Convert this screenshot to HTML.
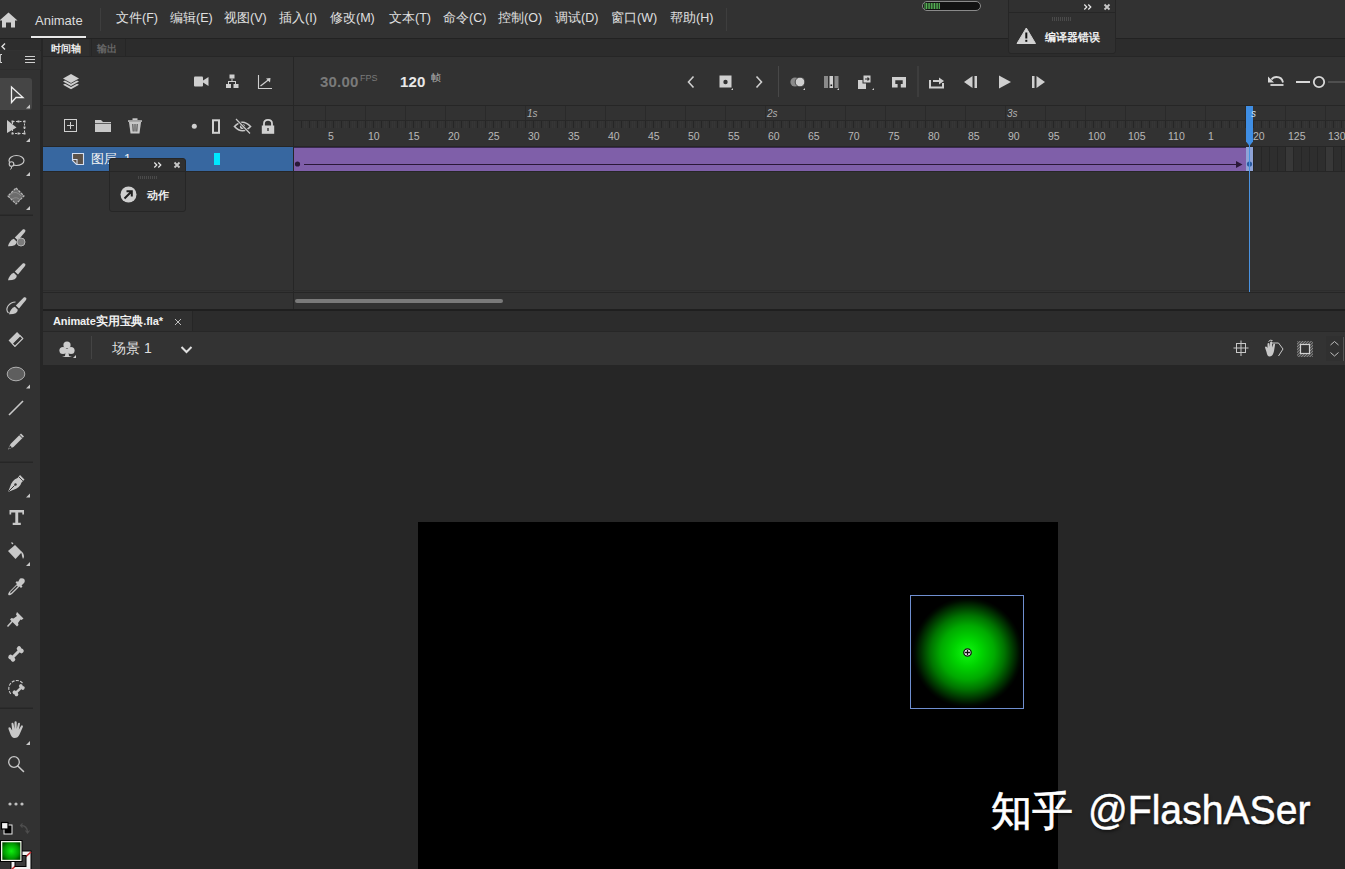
<!DOCTYPE html>
<html><head><meta charset="utf-8">
<style>
*{margin:0;padding:0;box-sizing:border-box}
html,body{width:1345px;height:869px;overflow:hidden;background:#262626;font-family:"Liberation Sans",sans-serif;color:#d8d8d8}
.a{position:absolute}
svg{position:absolute;overflow:visible}
.menu{left:0;top:0;width:1345px;height:38px;background:#323232}
.rl{position:absolute;top:130px;font-size:10.5px;line-height:13px;color:#b8b8b8;white-space:nowrap}
.sl{position:absolute;top:108px;font-size:10px;line-height:12px;color:#b0b0b0;font-style:italic}
.mi{position:absolute;top:10px;font-size:12.5px;color:#e0e0e0;white-space:nowrap;line-height:16px}
</style></head><body>
<!-- menu bar -->
<div class="a menu"></div>
<div class="a" style="left:0;top:38px;width:1345px;height:1px;background:#222"></div>
<!-- home icon -->
<svg style="left:0;top:11.5px" width="18" height="16" viewBox="0 0 18 16"><path d="M8.5 0.5 L17.5 8.5 L15 8.5 L15 15.5 L11 15.5 L11 10.5 L6 10.5 L6 15.5 L2 15.5 L2 8.5 L-0.5 8.5 Z" fill="#cfcfcf"/></svg>
<div class="mi" style="left:35px;top:12.5px;font-size:13px;color:#dcdcdc">Animate</div>
<div class="a" style="left:31px;top:36px;width:55px;height:2px;background:#e8e8e8"></div>
<div class="a" style="left:100px;top:8px;width:1px;height:23px;background:#3e3e3e"></div>
<div class="mi" style="left:116px">文件(F)</div>
<div class="mi" style="left:170px">编辑(E)</div>
<div class="mi" style="left:224px">视图(V)</div>
<div class="mi" style="left:279px">插入(I)</div>
<div class="mi" style="left:330px">修改(M)</div>
<div class="mi" style="left:389px">文本(T)</div>
<div class="mi" style="left:443px">命令(C)</div>
<div class="mi" style="left:498px">控制(O)</div>
<div class="mi" style="left:555px">调试(D)</div>
<div class="mi" style="left:611px">窗口(W)</div>
<div class="mi" style="left:670px">帮助(H)</div>
<div class="a" style="left:726px;top:8px;width:1px;height:23px;background:#3e3e3e"></div>



<!-- left toolbar -->
<div class="a" style="left:0;top:39px;width:41px;height:830px;background:#323232"></div>
<div class="a" style="left:40px;top:39px;width:3px;height:830px;background:#262626"></div>
<!-- toolbar header -->
<div class="a" style="left:0;top:39px;width:41px;height:11px;background:#2d2d2d"></div>
<svg style="left:1px;top:43px" width="5" height="7"><path d="M4 0.5 L1 3.5 L4 6.5" stroke="#e0e0e0" stroke-width="1.4" fill="none"/></svg>
<div class="a" style="left:0;top:51px;width:41px;height:18px;background:#303030"></div>
<div class="a" style="left:0;top:54px;width:2px;height:1px;background:#ddd"></div>
<div class="a" style="left:0;top:62px;width:2px;height:1px;background:#ddd"></div>
<div class="a" style="left:0;top:54px;width:1px;height:9px;background:#bbb"></div>
<div class="a" style="left:25px;top:56px;width:10px;height:1px;background:#d0d0d0"></div>
<div class="a" style="left:25px;top:59px;width:10px;height:1px;background:#d0d0d0"></div>
<div class="a" style="left:25px;top:62px;width:10px;height:1px;background:#d0d0d0"></div>
<div class="a" style="left:0;top:69px;width:41px;height:1px;background:#2c2c2c"></div>
<!-- selected tool -->
<div class="a" style="left:-3px;top:78px;width:35px;height:32px;background:#454545;border-radius:3px"></div>
<svg style="left:0;top:0" width="41" height="869" viewBox="0 0 41 869">
<g fill="#c8c8c8" stroke="none">
<!-- corner triangles -->
<path d="M30 104.5 L30 108.5 L26 108.5Z"/>
<path d="M30 138 L30 142 L26 142Z"/>
<path d="M30 172 L30 176 L26 176Z"/>
<path d="M30 206 L30 210 L26 210Z"/>
<path d="M30 384.5 L30 388.5 L26 388.5Z"/>
<path d="M30 493.5 L30 497.5 L26 497.5Z"/>
<path d="M30 562 L30 566 L26 566Z"/>
<path d="M30 741 L30 745 L26 745Z"/>
</g>
<!-- separators -->
<rect x="0" y="214.5" width="33" height="1.5" fill="#262626"/>
<rect x="0" y="461.5" width="33" height="1.5" fill="#262626"/>
<rect x="0" y="707.5" width="33" height="1.5" fill="#262626"/>
<!-- selection -->
<path d="M11.5 87 L11.5 102.5 L16 97.5 L23 97.5 Z" fill="none" stroke="#f0f0f0" stroke-width="1.3" stroke-linejoin="miter"/>
<!-- free transform -->
<path d="M7 120 L7 133 L16.5 127.5 Z" fill="#c8c8c8"/>
<rect x="12.5" y="121.5" width="12" height="12" fill="none" stroke="#c8c8c8" stroke-width="1" stroke-dasharray="2 1.5"/>
<g fill="#c8c8c8"><rect x="11.5" y="120.5" width="2" height="2"/><rect x="23.5" y="120.5" width="2" height="2"/><rect x="11.5" y="132.5" width="2" height="2"/><rect x="23.5" y="132.5" width="2" height="2"/><rect x="17.5" y="120.5" width="2" height="2"/><rect x="17.5" y="132.5" width="2" height="2"/><rect x="23.5" y="126.5" width="2" height="2"/></g>
<!-- lasso -->
<ellipse cx="16.5" cy="160.5" rx="7.5" ry="5" fill="none" stroke="#c8c8c8" stroke-width="1.2"/>
<circle cx="11.5" cy="164" r="2.3" fill="#323232" stroke="#c8c8c8" stroke-width="1.1"/>
<path d="M11.5 166.5 Q12 168 10.5 169.5" fill="none" stroke="#c8c8c8" stroke-width="1"/>
<!-- warp diamond -->
<path d="M16 188 L24 196 L16 204 L8 196 Z" fill="#6c6c6c" stroke="#b8b8b8" stroke-width="1.2" stroke-dasharray="2.5 1"/>
<path d="M11 194 Q16 190 21 196 M12 199 Q17 196 20 200" fill="none" stroke="#909090" stroke-width="0.8"/>
<!-- fluid brush -->
<path d="M23 229.3 Q24.5 228.8 25.3 230 Q25.6 231 25 232 L18 240.6 L14.8 237.6 Z" fill="#c8c8c8"/>
<path d="M13.8 238.8 L16.8 241.8 Q16.5 246.5 8 246.3 Q9.5 240.5 13.8 238.8 Z" fill="#c8c8c8"/>
<circle cx="21" cy="242" r="4" fill="#7c7c7c" stroke="#bdbdbd" stroke-width="0.9"/>
<!-- brush -->
<path d="M23 263.3 Q24.5 262.8 25.3 264 Q25.6 265 25 266 L18 274.6 L14.8 271.6 Z" fill="#c8c8c8"/>
<path d="M13.8 272.8 L16.8 275.8 Q16.5 280.5 8 280.3 Q9.5 274.5 13.8 272.8 Z" fill="#c8c8c8"/>
<!-- art brush -->
<path d="M24 297.3 Q25.5 296.8 26.3 298 Q26.6 299 26 300 L19 308.6 L15.8 305.6 Z" fill="#c8c8c8"/>
<path d="M14.8 306.8 L17.8 309.8 Q17.5 314.5 9 314.3 Q10.5 308.5 14.8 306.8 Z" fill="#c8c8c8"/>
<path d="M15.5 302 Q11 302 8 306 Q5.5 310 8.5 313" fill="none" stroke="#c8c8c8" stroke-width="1.1"/>
<!-- eraser -->
<g transform="rotate(-45 16 339.5)"><rect x="10" y="335" width="12" height="9" fill="#c8c8c8"/><rect x="10.5" y="339.8" width="11" height="3.7" fill="#323232" stroke="#c8c8c8" stroke-width="1"/></g>
<!-- oval -->
<ellipse cx="16" cy="374" rx="8.8" ry="6.8" fill="#5e5e5e" stroke="#bcbcbc" stroke-width="0.9"/>
<!-- line -->
<path d="M9 415 L23 401" stroke="#c8c8c8" stroke-width="1.6"/>
<!-- pencil -->
<path d="M21 433.5 L24 436.5 L13.5 447 L8 449.5 L10.5 444 Z" fill="#c8c8c8"/>
<path d="M19.5 435 L22.5 438" stroke="#323232" stroke-width="1"/>
<path d="M8.5 449 L10 445.5 L12 447.5 Z" fill="#323232"/>
<!-- pen -->
<path d="M20 475 L24.5 479.5 L21.5 482.5 Q20 488 13 490 L8 492 L10 487 Q12 480 17.5 478 Z" fill="#c8c8c8"/>
<path d="M8.5 491.5 L14.5 485.5" stroke="#323232" stroke-width="1"/>
<circle cx="15.5" cy="484.5" r="1.2" fill="#323232"/>
<path d="M18.8 476.8 L22.8 480.8" stroke="#323232" stroke-width="0.9"/>
<!-- T -->
<path d="M9.5 510 L24 510 L24 514.5 L22.3 514.5 L22.3 512.6 L18.2 512.6 L18.2 522.8 L20.8 522.8 L20.8 525 L12.7 525 L12.7 522.8 L15.3 522.8 L15.3 512.6 L11.2 512.6 L11.2 514.5 L9.5 514.5 Z" fill="#c8c8c8"/>
<!-- bucket -->
<path d="M8 551 L15 545 L22 552 L15.5 559 Z" fill="#c8c8c8"/>
<path d="M13 544 L11.5 542.5" stroke="#c8c8c8" stroke-width="1.2"/>
<path d="M21.5 551.5 Q24 553 24 557 L23 559 L22 556 Q22 554 21 552.5 Z" fill="#c8c8c8"/>
<!-- eyedropper -->
<path d="M20 578.5 Q23 577.5 24.5 579.5 Q25.5 582 23 584 L21.5 585.5 L22.5 586.5 L21 588 L19.5 586.5 L12 594 Q9.5 596 8.5 595 Q7.5 594 9.5 591.5 L17 584 L15.5 582.5 L17 581 L18 582 Z" fill="#c8c8c8"/>
<path d="M16.8 585.5 L10.5 591.8 Q9.8 593 10.6 593.5 L17.8 586.5Z" fill="#323232"/>
<!-- pin -->
<path d="M17 612 L23.5 618.5 L21.5 620 L20.5 619.5 L18 623 L18.5 625 L17 626.5 L10 619.5 L11.5 618 L13.5 618.5 L17 616 L16 614.5 Z" fill="#c8c8c8"/>
<path d="M12.5 621 L7.5 626.5" stroke="#c8c8c8" stroke-width="1.5"/>
<!-- bone -->
<g transform="rotate(-45 16 654)"><rect x="11" y="652.5" width="10" height="3" fill="#c8c8c8"/><circle cx="10" cy="652.3" r="2.3" fill="#c8c8c8"/><circle cx="10" cy="655.7" r="2.3" fill="#c8c8c8"/><circle cx="22" cy="652.3" r="2.3" fill="#c8c8c8"/><circle cx="22" cy="655.7" r="2.3" fill="#c8c8c8"/></g>
<!-- bind -->
<path d="M22.5 683 A7.5 7.5 0 1 0 11 694" fill="none" stroke="#c8c8c8" stroke-width="1.1" stroke-dasharray="3 1.3"/>
<g transform="rotate(-45 18.5 690)"><rect x="14.5" y="689" width="8" height="2.4" fill="#c8c8c8"/><circle cx="14" cy="688.8" r="1.9" fill="#c8c8c8"/><circle cx="14" cy="691.6" r="1.9" fill="#c8c8c8"/><circle cx="23" cy="688.8" r="1.9" fill="#c8c8c8"/><circle cx="23" cy="691.6" r="1.9" fill="#c8c8c8"/></g>
<!-- hand -->
<path d="M10 733 L8.5 729 Q8 727.5 9.3 727.3 Q10.5 727.2 11.5 729.5 L12.2 730.5 L11.5 724 Q11.3 722.8 12.3 722.7 Q13.3 722.6 13.6 724 L14.5 729 L14.5 722.5 Q14.5 721.3 15.6 721.3 Q16.7 721.3 16.7 722.5 L16.7 729 L18 723.5 Q18.3 722.5 19.3 722.7 Q20.2 723 19.9 724.2 L18.8 729.8 L21 726 Q21.6 725 22.5 725.5 Q23.3 726.1 22.7 727.2 L19.5 734.5 Q18 738 14.5 738 Q11.5 738 10 733 Z" fill="#c8c8c8"/>
<!-- zoom -->
<circle cx="14" cy="762" r="5.3" fill="none" stroke="#c8c8c8" stroke-width="1.3"/>
<path d="M17.8 766 L23.5 771.5" stroke="#c8c8c8" stroke-width="1.6" stroke-linecap="round"/>
<!-- dots -->
<circle cx="10" cy="804" r="1.6" fill="#c0c0c0"/><circle cx="16" cy="804" r="1.6" fill="#c0c0c0"/><circle cx="22" cy="804" r="1.6" fill="#c0c0c0"/>
<!-- default colors -->
<rect x="4" y="825" width="8" height="9" fill="#000" stroke="#e8e8e8" stroke-width="1"/>
<rect x="1.5" y="822.5" width="6.5" height="6.5" fill="#f2f2f2" stroke="#000" stroke-width="1.2"/>
<!-- swap -->
<path d="M21 825.5 Q27 825.5 27.5 832" fill="none" stroke="#4e4e4e" stroke-width="1.3"/>
<path d="M25.5 830.5 L27.5 833 L29.5 830.5" fill="none" stroke="#4e4e4e" stroke-width="1.2"/>
<path d="M22.5 823.5 L20.5 825.5 L22.5 827.5" fill="none" stroke="#4e4e4e" stroke-width="1.2"/>
<!-- stroke swatch -->
<rect x="10.5" y="850.5" width="21" height="20" fill="#000"/>
<rect x="11.5" y="851.5" width="19" height="19" fill="#f2f2f2"/>
<path d="M11 870 L31 852" stroke="#c8282c" stroke-width="1.6"/>
<rect x="14.5" y="855" width="12" height="12" fill="#000"/>
<rect x="15.5" y="856" width="10" height="10" fill="#3a3a3a"/>
<!-- fill swatch -->
<defs><radialGradient id="gsw" cx="0.5" cy="0.5" r="0.6"><stop offset="0" stop-color="#10ee10"/><stop offset="0.7" stop-color="#009a00"/><stop offset="1" stop-color="#005500"/></radialGradient></defs>
<rect x="0" y="840" width="22.5" height="22" fill="#000"/>
<rect x="1" y="841" width="20.5" height="20" fill="#f4f4ec"/>
<rect x="2.3" y="842.3" width="18" height="17.5" fill="url(#gsw)"/>
</svg>



<!-- timeline panel -->
<div class="a" style="left:43px;top:39px;width:1302px;height:270px;background:#323232"></div>
<!-- tab row -->
<div class="a" style="left:43px;top:39px;width:1302px;height:17px;background:#2c2c2c"></div>
<div class="a" style="left:43px;top:39px;width:46px;height:17px;background:#2f2f2f"></div>
<div class="a" style="left:91px;top:39px;width:1px;height:17px;background:#262626"></div>
<div class="a" style="left:125px;top:39px;width:1px;height:17px;background:#262626"></div>
<div class="a" style="left:43px;top:56px;width:1302px;height:1px;background:#262626"></div>
<div class="a" style="left:51px;top:40.5px;font-size:10px;line-height:15px;color:#f0f0f0;font-weight:bold">时间轴</div>
<div class="a" style="left:97px;top:40.5px;font-size:10px;line-height:15px;color:#666;font-weight:bold">输出</div>
<!-- vertical divider layer/frames -->
<div class="a" style="left:293px;top:57px;width:1px;height:252px;background:#262626"></div>
<!-- row separators -->
<div class="a" style="left:43px;top:105px;width:1302px;height:1px;background:#262626"></div>
<div class="a" style="left:43px;top:146px;width:250px;height:1px;background:#262626"></div>
<div class="a" style="left:43px;top:292px;width:1302px;height:1px;background:#262626"></div>
<div class="a" style="left:43px;top:290px;width:1302px;height:1px;background:#2d2d2d"></div>
<div class="a" style="left:43px;top:309px;width:1302px;height:2px;background:#1f1f1f"></div>
<!-- scrollbar thumb -->
<div class="a" style="left:295px;top:299px;width:208px;height:4px;background:#7a7a7a;border-radius:2px"></div>


<!-- ruler -->
<div class="a" style="left:294px;top:106px;width:1051px;height:40px;background:#323232"></div>
<div class="a" style="left:294px;top:120px;width:1051px;height:1px;background:#282828"></div>
<svg style="left:0;top:0" width="1345" height="146" viewBox="0 0 1345 146"><rect x="325" y="106" width="1" height="14" fill="#2a2a2a"/><rect x="365" y="106" width="1" height="14" fill="#2a2a2a"/><rect x="405" y="106" width="1" height="14" fill="#2a2a2a"/><rect x="445" y="106" width="1" height="14" fill="#2a2a2a"/><rect x="485" y="106" width="1" height="14" fill="#2a2a2a"/><rect x="525" y="106" width="1" height="14" fill="#2a2a2a"/><rect x="565" y="106" width="1" height="14" fill="#2a2a2a"/><rect x="605" y="106" width="1" height="14" fill="#2a2a2a"/><rect x="645" y="106" width="1" height="14" fill="#2a2a2a"/><rect x="685" y="106" width="1" height="14" fill="#2a2a2a"/><rect x="725" y="106" width="1" height="14" fill="#2a2a2a"/><rect x="765" y="106" width="1" height="14" fill="#2a2a2a"/><rect x="805" y="106" width="1" height="14" fill="#2a2a2a"/><rect x="845" y="106" width="1" height="14" fill="#2a2a2a"/><rect x="885" y="106" width="1" height="14" fill="#2a2a2a"/><rect x="925" y="106" width="1" height="14" fill="#2a2a2a"/><rect x="965" y="106" width="1" height="14" fill="#2a2a2a"/><rect x="1005" y="106" width="1" height="14" fill="#2a2a2a"/><rect x="1045" y="106" width="1" height="14" fill="#2a2a2a"/><rect x="1085" y="106" width="1" height="14" fill="#2a2a2a"/><rect x="1125" y="106" width="1" height="14" fill="#2a2a2a"/><rect x="1165" y="106" width="1" height="14" fill="#2a2a2a"/><rect x="1205" y="106" width="1" height="14" fill="#2a2a2a"/><rect x="1245" y="106" width="1" height="14" fill="#2a2a2a"/><rect x="1285" y="106" width="1" height="14" fill="#2a2a2a"/><rect x="1325" y="106" width="1" height="14" fill="#2a2a2a"/><rect x="301" y="121" width="1" height="7" fill="#262626"/><rect x="304" y="121" width="1" height="7" fill="#363636"/><rect x="306" y="121" width="1" height="7" fill="#363636"/><rect x="309" y="121" width="1" height="7" fill="#262626"/><rect x="312" y="121" width="1" height="7" fill="#363636"/><rect x="314" y="121" width="1" height="7" fill="#363636"/><rect x="317" y="121" width="1" height="7" fill="#262626"/><rect x="320" y="121" width="1" height="7" fill="#363636"/><rect x="322" y="121" width="1" height="7" fill="#363636"/><rect x="325" y="121" width="1" height="7" fill="#262626"/><rect x="328" y="121" width="1" height="7" fill="#363636"/><rect x="330" y="121" width="1" height="7" fill="#363636"/><rect x="333" y="121" width="1" height="7" fill="#262626"/><rect x="336" y="121" width="1" height="7" fill="#363636"/><rect x="338" y="121" width="1" height="7" fill="#363636"/><rect x="341" y="121" width="1" height="7" fill="#262626"/><rect x="344" y="121" width="1" height="7" fill="#363636"/><rect x="346" y="121" width="1" height="7" fill="#363636"/><rect x="349" y="121" width="1" height="7" fill="#262626"/><rect x="352" y="121" width="1" height="7" fill="#363636"/><rect x="354" y="121" width="1" height="7" fill="#363636"/><rect x="357" y="121" width="1" height="7" fill="#262626"/><rect x="360" y="121" width="1" height="7" fill="#363636"/><rect x="362" y="121" width="1" height="7" fill="#363636"/><rect x="365" y="121" width="1" height="7" fill="#262626"/><rect x="368" y="121" width="1" height="7" fill="#363636"/><rect x="370" y="121" width="1" height="7" fill="#363636"/><rect x="373" y="121" width="1" height="7" fill="#262626"/><rect x="376" y="121" width="1" height="7" fill="#363636"/><rect x="378" y="121" width="1" height="7" fill="#363636"/><rect x="381" y="121" width="1" height="7" fill="#262626"/><rect x="384" y="121" width="1" height="7" fill="#363636"/><rect x="386" y="121" width="1" height="7" fill="#363636"/><rect x="389" y="121" width="1" height="7" fill="#262626"/><rect x="392" y="121" width="1" height="7" fill="#363636"/><rect x="394" y="121" width="1" height="7" fill="#363636"/><rect x="397" y="121" width="1" height="7" fill="#262626"/><rect x="400" y="121" width="1" height="7" fill="#363636"/><rect x="402" y="121" width="1" height="7" fill="#363636"/><rect x="405" y="121" width="1" height="7" fill="#262626"/><rect x="408" y="121" width="1" height="7" fill="#363636"/><rect x="410" y="121" width="1" height="7" fill="#363636"/><rect x="413" y="121" width="1" height="7" fill="#262626"/><rect x="416" y="121" width="1" height="7" fill="#363636"/><rect x="418" y="121" width="1" height="7" fill="#363636"/><rect x="421" y="121" width="1" height="7" fill="#262626"/><rect x="424" y="121" width="1" height="7" fill="#363636"/><rect x="426" y="121" width="1" height="7" fill="#363636"/><rect x="429" y="121" width="1" height="7" fill="#262626"/><rect x="432" y="121" width="1" height="7" fill="#363636"/><rect x="434" y="121" width="1" height="7" fill="#363636"/><rect x="437" y="121" width="1" height="7" fill="#262626"/><rect x="440" y="121" width="1" height="7" fill="#363636"/><rect x="442" y="121" width="1" height="7" fill="#363636"/><rect x="445" y="121" width="1" height="7" fill="#262626"/><rect x="448" y="121" width="1" height="7" fill="#363636"/><rect x="450" y="121" width="1" height="7" fill="#363636"/><rect x="453" y="121" width="1" height="7" fill="#262626"/><rect x="456" y="121" width="1" height="7" fill="#363636"/><rect x="458" y="121" width="1" height="7" fill="#363636"/><rect x="461" y="121" width="1" height="7" fill="#262626"/><rect x="464" y="121" width="1" height="7" fill="#363636"/><rect x="466" y="121" width="1" height="7" fill="#363636"/><rect x="469" y="121" width="1" height="7" fill="#262626"/><rect x="472" y="121" width="1" height="7" fill="#363636"/><rect x="474" y="121" width="1" height="7" fill="#363636"/><rect x="477" y="121" width="1" height="7" fill="#262626"/><rect x="480" y="121" width="1" height="7" fill="#363636"/><rect x="482" y="121" width="1" height="7" fill="#363636"/><rect x="485" y="121" width="1" height="7" fill="#262626"/><rect x="488" y="121" width="1" height="7" fill="#363636"/><rect x="490" y="121" width="1" height="7" fill="#363636"/><rect x="493" y="121" width="1" height="7" fill="#262626"/><rect x="496" y="121" width="1" height="7" fill="#363636"/><rect x="498" y="121" width="1" height="7" fill="#363636"/><rect x="501" y="121" width="1" height="7" fill="#262626"/><rect x="504" y="121" width="1" height="7" fill="#363636"/><rect x="506" y="121" width="1" height="7" fill="#363636"/><rect x="509" y="121" width="1" height="7" fill="#262626"/><rect x="512" y="121" width="1" height="7" fill="#363636"/><rect x="514" y="121" width="1" height="7" fill="#363636"/><rect x="517" y="121" width="1" height="7" fill="#262626"/><rect x="520" y="121" width="1" height="7" fill="#363636"/><rect x="522" y="121" width="1" height="7" fill="#363636"/><rect x="525" y="121" width="1" height="7" fill="#262626"/><rect x="528" y="121" width="1" height="7" fill="#363636"/><rect x="530" y="121" width="1" height="7" fill="#363636"/><rect x="533" y="121" width="1" height="7" fill="#262626"/><rect x="536" y="121" width="1" height="7" fill="#363636"/><rect x="538" y="121" width="1" height="7" fill="#363636"/><rect x="541" y="121" width="1" height="7" fill="#262626"/><rect x="544" y="121" width="1" height="7" fill="#363636"/><rect x="546" y="121" width="1" height="7" fill="#363636"/><rect x="549" y="121" width="1" height="7" fill="#262626"/><rect x="552" y="121" width="1" height="7" fill="#363636"/><rect x="554" y="121" width="1" height="7" fill="#363636"/><rect x="557" y="121" width="1" height="7" fill="#262626"/><rect x="560" y="121" width="1" height="7" fill="#363636"/><rect x="562" y="121" width="1" height="7" fill="#363636"/><rect x="565" y="121" width="1" height="7" fill="#262626"/><rect x="568" y="121" width="1" height="7" fill="#363636"/><rect x="570" y="121" width="1" height="7" fill="#363636"/><rect x="573" y="121" width="1" height="7" fill="#262626"/><rect x="576" y="121" width="1" height="7" fill="#363636"/><rect x="578" y="121" width="1" height="7" fill="#363636"/><rect x="581" y="121" width="1" height="7" fill="#262626"/><rect x="584" y="121" width="1" height="7" fill="#363636"/><rect x="586" y="121" width="1" height="7" fill="#363636"/><rect x="589" y="121" width="1" height="7" fill="#262626"/><rect x="592" y="121" width="1" height="7" fill="#363636"/><rect x="594" y="121" width="1" height="7" fill="#363636"/><rect x="597" y="121" width="1" height="7" fill="#262626"/><rect x="600" y="121" width="1" height="7" fill="#363636"/><rect x="602" y="121" width="1" height="7" fill="#363636"/><rect x="605" y="121" width="1" height="7" fill="#262626"/><rect x="608" y="121" width="1" height="7" fill="#363636"/><rect x="610" y="121" width="1" height="7" fill="#363636"/><rect x="613" y="121" width="1" height="7" fill="#262626"/><rect x="616" y="121" width="1" height="7" fill="#363636"/><rect x="618" y="121" width="1" height="7" fill="#363636"/><rect x="621" y="121" width="1" height="7" fill="#262626"/><rect x="624" y="121" width="1" height="7" fill="#363636"/><rect x="626" y="121" width="1" height="7" fill="#363636"/><rect x="629" y="121" width="1" height="7" fill="#262626"/><rect x="632" y="121" width="1" height="7" fill="#363636"/><rect x="634" y="121" width="1" height="7" fill="#363636"/><rect x="637" y="121" width="1" height="7" fill="#262626"/><rect x="640" y="121" width="1" height="7" fill="#363636"/><rect x="642" y="121" width="1" height="7" fill="#363636"/><rect x="645" y="121" width="1" height="7" fill="#262626"/><rect x="648" y="121" width="1" height="7" fill="#363636"/><rect x="650" y="121" width="1" height="7" fill="#363636"/><rect x="653" y="121" width="1" height="7" fill="#262626"/><rect x="656" y="121" width="1" height="7" fill="#363636"/><rect x="658" y="121" width="1" height="7" fill="#363636"/><rect x="661" y="121" width="1" height="7" fill="#262626"/><rect x="664" y="121" width="1" height="7" fill="#363636"/><rect x="666" y="121" width="1" height="7" fill="#363636"/><rect x="669" y="121" width="1" height="7" fill="#262626"/><rect x="672" y="121" width="1" height="7" fill="#363636"/><rect x="674" y="121" width="1" height="7" fill="#363636"/><rect x="677" y="121" width="1" height="7" fill="#262626"/><rect x="680" y="121" width="1" height="7" fill="#363636"/><rect x="682" y="121" width="1" height="7" fill="#363636"/><rect x="685" y="121" width="1" height="7" fill="#262626"/><rect x="688" y="121" width="1" height="7" fill="#363636"/><rect x="690" y="121" width="1" height="7" fill="#363636"/><rect x="693" y="121" width="1" height="7" fill="#262626"/><rect x="696" y="121" width="1" height="7" fill="#363636"/><rect x="698" y="121" width="1" height="7" fill="#363636"/><rect x="701" y="121" width="1" height="7" fill="#262626"/><rect x="704" y="121" width="1" height="7" fill="#363636"/><rect x="706" y="121" width="1" height="7" fill="#363636"/><rect x="709" y="121" width="1" height="7" fill="#262626"/><rect x="712" y="121" width="1" height="7" fill="#363636"/><rect x="714" y="121" width="1" height="7" fill="#363636"/><rect x="717" y="121" width="1" height="7" fill="#262626"/><rect x="720" y="121" width="1" height="7" fill="#363636"/><rect x="722" y="121" width="1" height="7" fill="#363636"/><rect x="725" y="121" width="1" height="7" fill="#262626"/><rect x="728" y="121" width="1" height="7" fill="#363636"/><rect x="730" y="121" width="1" height="7" fill="#363636"/><rect x="733" y="121" width="1" height="7" fill="#262626"/><rect x="736" y="121" width="1" height="7" fill="#363636"/><rect x="738" y="121" width="1" height="7" fill="#363636"/><rect x="741" y="121" width="1" height="7" fill="#262626"/><rect x="744" y="121" width="1" height="7" fill="#363636"/><rect x="746" y="121" width="1" height="7" fill="#363636"/><rect x="749" y="121" width="1" height="7" fill="#262626"/><rect x="752" y="121" width="1" height="7" fill="#363636"/><rect x="754" y="121" width="1" height="7" fill="#363636"/><rect x="757" y="121" width="1" height="7" fill="#262626"/><rect x="760" y="121" width="1" height="7" fill="#363636"/><rect x="762" y="121" width="1" height="7" fill="#363636"/><rect x="765" y="121" width="1" height="7" fill="#262626"/><rect x="768" y="121" width="1" height="7" fill="#363636"/><rect x="770" y="121" width="1" height="7" fill="#363636"/><rect x="773" y="121" width="1" height="7" fill="#262626"/><rect x="776" y="121" width="1" height="7" fill="#363636"/><rect x="778" y="121" width="1" height="7" fill="#363636"/><rect x="781" y="121" width="1" height="7" fill="#262626"/><rect x="784" y="121" width="1" height="7" fill="#363636"/><rect x="786" y="121" width="1" height="7" fill="#363636"/><rect x="789" y="121" width="1" height="7" fill="#262626"/><rect x="792" y="121" width="1" height="7" fill="#363636"/><rect x="794" y="121" width="1" height="7" fill="#363636"/><rect x="797" y="121" width="1" height="7" fill="#262626"/><rect x="800" y="121" width="1" height="7" fill="#363636"/><rect x="802" y="121" width="1" height="7" fill="#363636"/><rect x="805" y="121" width="1" height="7" fill="#262626"/><rect x="808" y="121" width="1" height="7" fill="#363636"/><rect x="810" y="121" width="1" height="7" fill="#363636"/><rect x="813" y="121" width="1" height="7" fill="#262626"/><rect x="816" y="121" width="1" height="7" fill="#363636"/><rect x="818" y="121" width="1" height="7" fill="#363636"/><rect x="821" y="121" width="1" height="7" fill="#262626"/><rect x="824" y="121" width="1" height="7" fill="#363636"/><rect x="826" y="121" width="1" height="7" fill="#363636"/><rect x="829" y="121" width="1" height="7" fill="#262626"/><rect x="832" y="121" width="1" height="7" fill="#363636"/><rect x="834" y="121" width="1" height="7" fill="#363636"/><rect x="837" y="121" width="1" height="7" fill="#262626"/><rect x="840" y="121" width="1" height="7" fill="#363636"/><rect x="842" y="121" width="1" height="7" fill="#363636"/><rect x="845" y="121" width="1" height="7" fill="#262626"/><rect x="848" y="121" width="1" height="7" fill="#363636"/><rect x="850" y="121" width="1" height="7" fill="#363636"/><rect x="853" y="121" width="1" height="7" fill="#262626"/><rect x="856" y="121" width="1" height="7" fill="#363636"/><rect x="858" y="121" width="1" height="7" fill="#363636"/><rect x="861" y="121" width="1" height="7" fill="#262626"/><rect x="864" y="121" width="1" height="7" fill="#363636"/><rect x="866" y="121" width="1" height="7" fill="#363636"/><rect x="869" y="121" width="1" height="7" fill="#262626"/><rect x="872" y="121" width="1" height="7" fill="#363636"/><rect x="874" y="121" width="1" height="7" fill="#363636"/><rect x="877" y="121" width="1" height="7" fill="#262626"/><rect x="880" y="121" width="1" height="7" fill="#363636"/><rect x="882" y="121" width="1" height="7" fill="#363636"/><rect x="885" y="121" width="1" height="7" fill="#262626"/><rect x="888" y="121" width="1" height="7" fill="#363636"/><rect x="890" y="121" width="1" height="7" fill="#363636"/><rect x="893" y="121" width="1" height="7" fill="#262626"/><rect x="896" y="121" width="1" height="7" fill="#363636"/><rect x="898" y="121" width="1" height="7" fill="#363636"/><rect x="901" y="121" width="1" height="7" fill="#262626"/><rect x="904" y="121" width="1" height="7" fill="#363636"/><rect x="906" y="121" width="1" height="7" fill="#363636"/><rect x="909" y="121" width="1" height="7" fill="#262626"/><rect x="912" y="121" width="1" height="7" fill="#363636"/><rect x="914" y="121" width="1" height="7" fill="#363636"/><rect x="917" y="121" width="1" height="7" fill="#262626"/><rect x="920" y="121" width="1" height="7" fill="#363636"/><rect x="922" y="121" width="1" height="7" fill="#363636"/><rect x="925" y="121" width="1" height="7" fill="#262626"/><rect x="928" y="121" width="1" height="7" fill="#363636"/><rect x="930" y="121" width="1" height="7" fill="#363636"/><rect x="933" y="121" width="1" height="7" fill="#262626"/><rect x="936" y="121" width="1" height="7" fill="#363636"/><rect x="938" y="121" width="1" height="7" fill="#363636"/><rect x="941" y="121" width="1" height="7" fill="#262626"/><rect x="944" y="121" width="1" height="7" fill="#363636"/><rect x="946" y="121" width="1" height="7" fill="#363636"/><rect x="949" y="121" width="1" height="7" fill="#262626"/><rect x="952" y="121" width="1" height="7" fill="#363636"/><rect x="954" y="121" width="1" height="7" fill="#363636"/><rect x="957" y="121" width="1" height="7" fill="#262626"/><rect x="960" y="121" width="1" height="7" fill="#363636"/><rect x="962" y="121" width="1" height="7" fill="#363636"/><rect x="965" y="121" width="1" height="7" fill="#262626"/><rect x="968" y="121" width="1" height="7" fill="#363636"/><rect x="970" y="121" width="1" height="7" fill="#363636"/><rect x="973" y="121" width="1" height="7" fill="#262626"/><rect x="976" y="121" width="1" height="7" fill="#363636"/><rect x="978" y="121" width="1" height="7" fill="#363636"/><rect x="981" y="121" width="1" height="7" fill="#262626"/><rect x="984" y="121" width="1" height="7" fill="#363636"/><rect x="986" y="121" width="1" height="7" fill="#363636"/><rect x="989" y="121" width="1" height="7" fill="#262626"/><rect x="992" y="121" width="1" height="7" fill="#363636"/><rect x="994" y="121" width="1" height="7" fill="#363636"/><rect x="997" y="121" width="1" height="7" fill="#262626"/><rect x="1000" y="121" width="1" height="7" fill="#363636"/><rect x="1002" y="121" width="1" height="7" fill="#363636"/><rect x="1005" y="121" width="1" height="7" fill="#262626"/><rect x="1008" y="121" width="1" height="7" fill="#363636"/><rect x="1010" y="121" width="1" height="7" fill="#363636"/><rect x="1013" y="121" width="1" height="7" fill="#262626"/><rect x="1016" y="121" width="1" height="7" fill="#363636"/><rect x="1018" y="121" width="1" height="7" fill="#363636"/><rect x="1021" y="121" width="1" height="7" fill="#262626"/><rect x="1024" y="121" width="1" height="7" fill="#363636"/><rect x="1026" y="121" width="1" height="7" fill="#363636"/><rect x="1029" y="121" width="1" height="7" fill="#262626"/><rect x="1032" y="121" width="1" height="7" fill="#363636"/><rect x="1034" y="121" width="1" height="7" fill="#363636"/><rect x="1037" y="121" width="1" height="7" fill="#262626"/><rect x="1040" y="121" width="1" height="7" fill="#363636"/><rect x="1042" y="121" width="1" height="7" fill="#363636"/><rect x="1045" y="121" width="1" height="7" fill="#262626"/><rect x="1048" y="121" width="1" height="7" fill="#363636"/><rect x="1050" y="121" width="1" height="7" fill="#363636"/><rect x="1053" y="121" width="1" height="7" fill="#262626"/><rect x="1056" y="121" width="1" height="7" fill="#363636"/><rect x="1058" y="121" width="1" height="7" fill="#363636"/><rect x="1061" y="121" width="1" height="7" fill="#262626"/><rect x="1064" y="121" width="1" height="7" fill="#363636"/><rect x="1066" y="121" width="1" height="7" fill="#363636"/><rect x="1069" y="121" width="1" height="7" fill="#262626"/><rect x="1072" y="121" width="1" height="7" fill="#363636"/><rect x="1074" y="121" width="1" height="7" fill="#363636"/><rect x="1077" y="121" width="1" height="7" fill="#262626"/><rect x="1080" y="121" width="1" height="7" fill="#363636"/><rect x="1082" y="121" width="1" height="7" fill="#363636"/><rect x="1085" y="121" width="1" height="7" fill="#262626"/><rect x="1088" y="121" width="1" height="7" fill="#363636"/><rect x="1090" y="121" width="1" height="7" fill="#363636"/><rect x="1093" y="121" width="1" height="7" fill="#262626"/><rect x="1096" y="121" width="1" height="7" fill="#363636"/><rect x="1098" y="121" width="1" height="7" fill="#363636"/><rect x="1101" y="121" width="1" height="7" fill="#262626"/><rect x="1104" y="121" width="1" height="7" fill="#363636"/><rect x="1106" y="121" width="1" height="7" fill="#363636"/><rect x="1109" y="121" width="1" height="7" fill="#262626"/><rect x="1112" y="121" width="1" height="7" fill="#363636"/><rect x="1114" y="121" width="1" height="7" fill="#363636"/><rect x="1117" y="121" width="1" height="7" fill="#262626"/><rect x="1120" y="121" width="1" height="7" fill="#363636"/><rect x="1122" y="121" width="1" height="7" fill="#363636"/><rect x="1125" y="121" width="1" height="7" fill="#262626"/><rect x="1128" y="121" width="1" height="7" fill="#363636"/><rect x="1130" y="121" width="1" height="7" fill="#363636"/><rect x="1133" y="121" width="1" height="7" fill="#262626"/><rect x="1136" y="121" width="1" height="7" fill="#363636"/><rect x="1138" y="121" width="1" height="7" fill="#363636"/><rect x="1141" y="121" width="1" height="7" fill="#262626"/><rect x="1144" y="121" width="1" height="7" fill="#363636"/><rect x="1146" y="121" width="1" height="7" fill="#363636"/><rect x="1149" y="121" width="1" height="7" fill="#262626"/><rect x="1152" y="121" width="1" height="7" fill="#363636"/><rect x="1154" y="121" width="1" height="7" fill="#363636"/><rect x="1157" y="121" width="1" height="7" fill="#262626"/><rect x="1160" y="121" width="1" height="7" fill="#363636"/><rect x="1162" y="121" width="1" height="7" fill="#363636"/><rect x="1165" y="121" width="1" height="7" fill="#262626"/><rect x="1168" y="121" width="1" height="7" fill="#363636"/><rect x="1170" y="121" width="1" height="7" fill="#363636"/><rect x="1173" y="121" width="1" height="7" fill="#262626"/><rect x="1176" y="121" width="1" height="7" fill="#363636"/><rect x="1178" y="121" width="1" height="7" fill="#363636"/><rect x="1181" y="121" width="1" height="7" fill="#262626"/><rect x="1184" y="121" width="1" height="7" fill="#363636"/><rect x="1186" y="121" width="1" height="7" fill="#363636"/><rect x="1189" y="121" width="1" height="7" fill="#262626"/><rect x="1192" y="121" width="1" height="7" fill="#363636"/><rect x="1194" y="121" width="1" height="7" fill="#363636"/><rect x="1197" y="121" width="1" height="7" fill="#262626"/><rect x="1200" y="121" width="1" height="7" fill="#363636"/><rect x="1202" y="121" width="1" height="7" fill="#363636"/><rect x="1205" y="121" width="1" height="7" fill="#262626"/><rect x="1208" y="121" width="1" height="7" fill="#363636"/><rect x="1210" y="121" width="1" height="7" fill="#363636"/><rect x="1213" y="121" width="1" height="7" fill="#262626"/><rect x="1216" y="121" width="1" height="7" fill="#363636"/><rect x="1218" y="121" width="1" height="7" fill="#363636"/><rect x="1221" y="121" width="1" height="7" fill="#262626"/><rect x="1224" y="121" width="1" height="7" fill="#363636"/><rect x="1226" y="121" width="1" height="7" fill="#363636"/><rect x="1229" y="121" width="1" height="7" fill="#262626"/><rect x="1232" y="121" width="1" height="7" fill="#363636"/><rect x="1234" y="121" width="1" height="7" fill="#363636"/><rect x="1237" y="121" width="1" height="7" fill="#262626"/><rect x="1240" y="121" width="1" height="7" fill="#363636"/><rect x="1242" y="121" width="1" height="7" fill="#363636"/><rect x="1245" y="121" width="1" height="7" fill="#262626"/><rect x="1248" y="121" width="1" height="7" fill="#363636"/><rect x="1250" y="121" width="1" height="7" fill="#363636"/><rect x="1253" y="121" width="1" height="7" fill="#262626"/><rect x="1256" y="121" width="1" height="7" fill="#363636"/><rect x="1258" y="121" width="1" height="7" fill="#363636"/><rect x="1261" y="121" width="1" height="7" fill="#262626"/><rect x="1264" y="121" width="1" height="7" fill="#363636"/><rect x="1266" y="121" width="1" height="7" fill="#363636"/><rect x="1269" y="121" width="1" height="7" fill="#262626"/><rect x="1272" y="121" width="1" height="7" fill="#363636"/><rect x="1274" y="121" width="1" height="7" fill="#363636"/><rect x="1277" y="121" width="1" height="7" fill="#262626"/><rect x="1280" y="121" width="1" height="7" fill="#363636"/><rect x="1282" y="121" width="1" height="7" fill="#363636"/><rect x="1285" y="121" width="1" height="7" fill="#262626"/><rect x="1288" y="121" width="1" height="7" fill="#363636"/><rect x="1290" y="121" width="1" height="7" fill="#363636"/><rect x="1293" y="121" width="1" height="7" fill="#262626"/><rect x="1296" y="121" width="1" height="7" fill="#363636"/><rect x="1298" y="121" width="1" height="7" fill="#363636"/><rect x="1301" y="121" width="1" height="7" fill="#262626"/><rect x="1304" y="121" width="1" height="7" fill="#363636"/><rect x="1306" y="121" width="1" height="7" fill="#363636"/><rect x="1309" y="121" width="1" height="7" fill="#262626"/><rect x="1312" y="121" width="1" height="7" fill="#363636"/><rect x="1314" y="121" width="1" height="7" fill="#363636"/><rect x="1317" y="121" width="1" height="7" fill="#262626"/><rect x="1320" y="121" width="1" height="7" fill="#363636"/><rect x="1322" y="121" width="1" height="7" fill="#363636"/><rect x="1325" y="121" width="1" height="7" fill="#262626"/><rect x="1328" y="121" width="1" height="7" fill="#363636"/><rect x="1330" y="121" width="1" height="7" fill="#363636"/><rect x="1333" y="121" width="1" height="7" fill="#262626"/><rect x="1336" y="121" width="1" height="7" fill="#363636"/><rect x="1338" y="121" width="1" height="7" fill="#363636"/><rect x="1341" y="121" width="1" height="7" fill="#262626"/><rect x="1344" y="121" width="1" height="7" fill="#363636"/><rect x="1346" y="121" width="1" height="7" fill="#363636"/></svg>
<div class="rl" style="left:328px">5</div><div class="rl" style="left:368px">10</div><div class="rl" style="left:408px">15</div><div class="rl" style="left:448px">20</div><div class="rl" style="left:488px">25</div><div class="rl" style="left:528px">30</div><div class="rl" style="left:568px">35</div><div class="rl" style="left:608px">40</div><div class="rl" style="left:648px">45</div><div class="rl" style="left:688px">50</div><div class="rl" style="left:728px">55</div><div class="rl" style="left:768px">60</div><div class="rl" style="left:808px">65</div><div class="rl" style="left:848px">70</div><div class="rl" style="left:888px">75</div><div class="rl" style="left:928px">80</div><div class="rl" style="left:968px">85</div><div class="rl" style="left:1008px">90</div><div class="rl" style="left:1048px">95</div><div class="rl" style="left:1088px">100</div><div class="rl" style="left:1128px">105</div><div class="rl" style="left:1168px">110</div><div class="rl" style="left:1208px">1</div><div class="rl" style="left:1253px">20</div><div class="rl" style="left:1288px">125</div><div class="rl" style="left:1328px">130</div>
<div class="sl" style="left:527px">1s</div>
<div class="sl" style="left:767px">2s</div>
<div class="sl" style="left:1007px">3s</div>
<div class="a" style="left:294px;top:146px;width:1051px;height:1px;background:#262626"></div>
<!-- layer row -->
<div class="a" style="left:43px;top:147px;width:250px;height:24px;background:#3767a0"></div>
<svg style="left:0;top:0" width="293" height="171" viewBox="0 0 293 171">
<path d="M72.5 153.5 L83.5 153.5 L83.5 164.5 L76.5 164.5 L72.5 160.5 Z" fill="#5c5249" stroke="#d4def0" stroke-width="1.1"/>
<path d="M72.5 159.5 L77 159.5 L77 164.5" fill="none" stroke="#d4def0" stroke-width="1.1"/>
</svg>
<div class="a" style="left:91px;top:151px;font-size:12.5px;line-height:16px;color:#f4f4f4">图层_1</div>
<div class="a" style="left:214px;top:153px;width:6px;height:12px;background:#00e8ff"></div>
<div class="a" style="left:43px;top:171px;width:1302px;height:1px;background:#262626"></div>
<!-- frames -->
<div class="a" style="left:294px;top:147px;width:1051px;height:24px;background:#2e2e2e"></div>
<svg style="left:0;top:0" width="1345" height="172" viewBox="0 0 1345 172"><rect x="1253" y="147" width="1" height="24" fill="#262626"/><rect x="1261" y="147" width="1" height="24" fill="#262626"/><rect x="1269" y="147" width="1" height="24" fill="#262626"/><rect x="1277" y="147" width="1" height="24" fill="#262626"/><rect x="1285" y="147" width="1" height="24" fill="#262626"/><rect x="1293" y="147" width="1" height="24" fill="#262626"/><rect x="1301" y="147" width="1" height="24" fill="#262626"/><rect x="1309" y="147" width="1" height="24" fill="#262626"/><rect x="1317" y="147" width="1" height="24" fill="#262626"/><rect x="1325" y="147" width="1" height="24" fill="#262626"/><rect x="1333" y="147" width="1" height="24" fill="#262626"/><rect x="1341" y="147" width="1" height="24" fill="#262626"/>
<rect x="1286" y="147" width="7" height="24" fill="#383838"/>
<rect x="1326" y="147" width="7" height="24" fill="#383838"/>
</svg>
<div class="a" style="left:294px;top:147px;width:952px;height:24px;background:#7f5fa9"></div>
<div class="a" style="left:294px;top:147px;width:952px;height:1px;background:#3a2a50"></div>
<div class="a" style="left:1246px;top:147px;width:7px;height:24px;background:#8fa3d6"></div>
<svg style="left:0;top:0" width="1345" height="172" viewBox="0 0 1345 172">
<circle cx="297.5" cy="164" r="2.6" fill="#2a1838"/>
<rect x="304" y="164" width="934" height="1" fill="#2a1838"/>
<path d="M1236 161 L1242.5 164.5 L1236 168Z" fill="#2a1838"/>
<circle cx="1249.5" cy="164" r="2.6" fill="#2a5aa0"/>
</svg>
<!-- playhead -->
<div class="a" style="left:1249px;top:144px;width:1px;height:148px;background:#4a92e0"></div>
<svg style="left:1245px;top:106px" width="9" height="42" viewBox="0 0 9 42"><path d="M1 0 L8 0 L8 35.5 L4.5 40 L1 35.5Z" fill="#3f8ee4"/></svg>
<div class="sl" style="left:1251px;color:#d0e0f0">s</div>

<!-- floating actions panel -->
<div class="a" style="left:109px;top:158px;width:77px;height:54px;background:#303030;border:1px solid #262626;border-radius:3px"></div>
<div class="a" style="left:110px;top:171px;width:75px;height:1px;background:#262626"></div>
<svg style="left:0;top:0" width="293" height="215" viewBox="0 0 293 215">
<path d="M154.3 162.5 L156.8 165 L154.3 167.5 M158.3 162.5 L160.8 165 L158.3 167.5" fill="none" stroke="#e8e8e8" stroke-width="1.2"/>
<path d="M174.5 162.5 L179.5 167.5 M179.5 162.5 L174.5 167.5" stroke="#c8c8c8" stroke-width="1.8"/>
<rect x="138" y="176" width="1" height="3" fill="#4a4a4a"/><rect x="140" y="176" width="1" height="3" fill="#4a4a4a"/><rect x="142" y="176" width="1" height="3" fill="#4a4a4a"/><rect x="144" y="176" width="1" height="3" fill="#4a4a4a"/><rect x="146" y="176" width="1" height="3" fill="#4a4a4a"/><rect x="148" y="176" width="1" height="3" fill="#4a4a4a"/><rect x="150" y="176" width="1" height="3" fill="#4a4a4a"/><rect x="152" y="176" width="1" height="3" fill="#4a4a4a"/><rect x="154" y="176" width="1" height="3" fill="#4a4a4a"/><rect x="156" y="176" width="1" height="3" fill="#4a4a4a"/>
<circle cx="128.5" cy="194.5" r="8" fill="#cfcfcf"/>
<path d="M124.5 198.5 L131.5 191.5 M126.5 191.2 L131.8 191.2 L131.8 196.5" fill="none" stroke="#1e1e1e" stroke-width="2"/>
</svg>
<div class="a" style="left:147px;top:188px;font-size:10.5px;line-height:14px;color:#f0f0f0;font-weight:bold">动作</div>

<!-- timeline toolbar icons -->
<svg style="left:0;top:0" width="1345" height="110" viewBox="0 0 1345 110">
<g fill="#cfcfcf">
<!-- layers -->
<path d="M71 74 L79 78.5 L71 83 L63 78.5Z"/>
<path d="M63 81.5 L65 80.4 L71 83.8 L77 80.4 L79 81.5 L71 86 Z"/>
<path d="M63 84.8 L65 83.7 L71 87.1 L77 83.7 L79 84.8 L71 89.3 Z"/>
<!-- camera -->
<rect x="194" y="76.5" width="9" height="10" rx="1"/>
<path d="M203 80.5 L208.5 77 L208.5 86 L203 82.5Z"/>
<!-- hierarchy -->
<rect x="229.5" y="74.5" width="5" height="4"/>
<rect x="226" y="84" width="5" height="4"/>
<rect x="233.5" y="84" width="5" height="4"/>
<path d="M231.5 78.5 L231.5 81 L228 81 L228 84 L229 84 L229 82 L235 82 L235 84 L236 84 L236 81 L232.5 81 L232.5 78.5Z"/>
</g>
<!-- graph -->
<path d="M258.5 75 L258.5 88.5 L272 88.5" fill="none" stroke="#cfcfcf" stroke-width="1.1"/>
<path d="M260.5 86 L269.5 79" fill="none" stroke="#cfcfcf" stroke-width="1.2"/>
<path d="M266 78.5 L270.5 78 L270 82.5Z" fill="#cfcfcf"/>
<!-- nav -->
<path d="M693.5 76.5 L688.5 82 L693.5 87.5" fill="none" stroke="#cfcfcf" stroke-width="1.6"/>
<rect x="719.5" y="75.5" width="12" height="12" fill="#cfcfcf"/>
<circle cx="725.5" cy="82" r="2.2" fill="#323232"/>
<path d="M733 88 L733 90 L731 90Z" fill="#cfcfcf"/>
<path d="M756.5 76.5 L761.5 82 L756.5 87.5" fill="none" stroke="#cfcfcf" stroke-width="1.6"/>
<rect x="778" y="66" width="1" height="31" fill="#484848"/>
<!-- onion -->
<circle cx="795" cy="82" r="4.6" fill="#8a8a8a"/>
<circle cx="800" cy="82" r="4.8" fill="#cfcfcf" stroke="#323232" stroke-width="0.8"/>
<path d="M805 88 L805 90 L803 90Z" fill="#cfcfcf"/>
<rect x="824" y="76" width="4" height="12" fill="#8a8a8a"/><rect x="829.5" y="76" width="3.5" height="12" fill="#cfcfcf"/><rect x="834.5" y="76" width="4" height="12" fill="#8a8a8a"/>
<rect x="830.5" y="84.5" width="1.6" height="1.6" fill="#111"/>
<path d="M839 88 L839 90 L837 90Z" fill="#cfcfcf"/>
<!-- edit multiple -->
<rect x="858" y="80" width="8" height="9" fill="#cfcfcf"/>
<rect x="863" y="75" width="8" height="8" fill="#cfcfcf" stroke="#323232" stroke-width="1"/>
<path d="M865 79 L869 79 M867.5 77.5 L869 79 L867.5 80.5" fill="none" stroke="#323232" stroke-width="1.1"/>
<path d="M874 88 L874 90 L872 90Z" fill="#cfcfcf"/>
<!-- loop -->
<path d="M892 77 H906 V87.5 H900.8 V84 H897.6 V87.5 H892 Z M895.3 80.3 V84 H902.7 V80.3 Z" fill="#cfcfcf" fill-rule="evenodd"/><rect x="895.3" y="84" width="2.3" height="0.01" fill="#cfcfcf"/>
<rect x="917.5" y="66" width="1" height="31" fill="#484848"/>
<!-- goto first -->
<path d="M930 80 L930 87.5 L943 87.5 L943 83" fill="none" stroke="#cfcfcf" stroke-width="2"/>
<path d="M933 81 L940 81" stroke="#cfcfcf" stroke-width="2"/>
<path d="M939 77.5 L944 81 L939 84.5Z" fill="#cfcfcf"/>
<!-- step back -->
<path d="M972.5 76 L972.5 88 L964 82Z" fill="#cfcfcf"/>
<rect x="974.5" y="76" width="2.5" height="12" fill="#cfcfcf"/>
<!-- play -->
<path d="M999 75.5 L1011 82 L999 88.5Z" fill="#cfcfcf"/>
<!-- step fwd -->
<rect x="1032" y="76" width="2.5" height="12" fill="#cfcfcf"/>
<path d="M1036.5 76 L1045 82 L1036.5 88Z" fill="#cfcfcf"/>
<!-- undo -->
<path d="M1270.5 85 L1283.5 85" stroke="#d8d8d8" stroke-width="1.8"/>
<path d="M1283 82.5 Q1282 77 1276.5 77 Q1273 77 1271.5 79.5" fill="none" stroke="#d8d8d8" stroke-width="1.8"/>
<path d="M1268 76.5 L1268 82.5 L1274 82.5Z" fill="#d8d8d8"/>
<path d="M1296 82 L1310 82" stroke="#d8d8d8" stroke-width="2"/>
<circle cx="1319" cy="82" r="5.2" fill="none" stroke="#d8d8d8" stroke-width="1.8"/>
<path d="M1328 82 L1345 82" stroke="#5a5a5a" stroke-width="1.5"/>
</svg>
<div class="a" style="left:320px;top:72.5px;font-size:15px;line-height:18px;color:#7a7a7a;font-weight:bold;letter-spacing:0.2px">30.00</div>
<div class="a" style="left:360px;top:73px;font-size:9px;line-height:10px;color:#7a7a7a">FPS</div>
<div class="a" style="left:400px;top:72.5px;font-size:15px;line-height:18px;color:#e8e8e8;font-weight:bold;letter-spacing:0.2px">120</div>
<div class="a" style="left:431px;top:72px;font-size:10px;line-height:12px;color:#b0b0b0">帧</div>

<!-- layer header icons -->
<svg style="left:0;top:0" width="293" height="140" viewBox="0 0 293 140">
<rect x="64.5" y="119.5" width="12" height="12" fill="none" stroke="#d0d0d0" stroke-width="1"/>
<path d="M70.5 122 L70.5 129 M67 125.5 L74 125.5" stroke="#d0d0d0" stroke-width="1"/>
<path d="M95 120 L101 120 L103 122 L111 122 L111 132 L95 132Z" fill="#c8c8c8"/>
<path d="M95 123.5 L111 123.5" stroke="#323232" stroke-width="0.7"/>
<path d="M129 122 L141 122 L139.5 133.5 L130.5 133.5Z" fill="#c8c8c8"/>
<rect x="128" y="120.3" width="14" height="1.5" fill="#c8c8c8"/>
<rect x="132.5" y="118.3" width="5" height="1.8" fill="#c8c8c8"/>
<path d="M132.8 124 L133.2 131.5 M135 124 L135 131.5 M137.2 124 L136.8 131.5" stroke="#323232" stroke-width="0.9"/>
<circle cx="194.3" cy="126.2" r="2.5" fill="#d0d0d0"/>
<rect x="213" y="120.3" width="6" height="12.5" fill="none" stroke="#d0d0d0" stroke-width="2"/>
<path d="M234.5 126.5 Q242.5 118 250.5 126.5 Q242.5 135 234.5 126.5Z" fill="none" stroke="#c8c8c8" stroke-width="1.7"/>
<circle cx="242.5" cy="126.5" r="2.6" fill="#c8c8c8"/>
<path d="M236 119 L250 133.5" stroke="#323232" stroke-width="2.6"/>
<path d="M236 119 L250 133.5" stroke="#c8c8c8" stroke-width="1.2"/>
<path d="M264 126 L264 123.5 Q264 119.8 268 119.8 Q272 119.8 272 123.5 L272 126" fill="none" stroke="#d0d0d0" stroke-width="1.8"/>
<rect x="261.8" y="125.5" width="12.4" height="8.3" fill="#d0d0d0"/>
<rect x="267.3" y="128" width="1.4" height="3" fill="#323232"/>
</svg>

<!-- doc tab -->
<div class="a" style="left:43px;top:311px;width:1302px;height:20px;background:#2c2c2c"></div>
<div class="a" style="left:43px;top:311px;width:149px;height:20px;background:#303030"></div>
<div class="a" style="left:192px;top:311px;width:1px;height:20px;background:#262626"></div>
<div class="a" style="left:43px;top:331px;width:1302px;height:1px;background:#272727"></div>
<div class="a" style="left:53px;top:314px;font-size:11px;line-height:14px;color:#f0f0f0;font-weight:bold;letter-spacing:-0.1px">Animate<span style="font-size:12px">实用宝典</span>.fla*</div>
<svg style="left:0;top:0" width="1345" height="370" viewBox="0 0 1345 370">
<path d="M175 319 L181 325 M181 319 L175 325" stroke="#bdbdbd" stroke-width="1"/>
</svg>
<!-- scene bar -->
<div class="a" style="left:43px;top:332px;width:1302px;height:33px;background:#333333"></div>
<div class="a" style="left:91px;top:336px;width:1px;height:23px;background:#444"></div>
<div class="a" style="left:112px;top:339px;font-size:14px;line-height:18px;color:#dedede">场景 1</div>
<svg style="left:0;top:0" width="1345" height="370" viewBox="0 0 1345 370">
<!-- club -->
<g fill="#cdcdcd"><circle cx="67" cy="345" r="3.6"/><circle cx="63" cy="350.5" r="3.6"/><circle cx="71" cy="350.5" r="3.6"/><path d="M66 349 L68 349 L69 356 L72 357 L62 357 L65 356Z"/></g>
<path d="M76 355 L76 358 L73 358Z" fill="#cdcdcd"/>
<path d="M181.5 347 L186.5 352 L191.5 347" fill="none" stroke="#e0e0e0" stroke-width="2"/>
<!-- right icons -->
<g stroke="#c8c8c8" fill="none" stroke-width="1">
<rect x="1236.5" y="343.5" width="9" height="9"/>
<path d="M1241 340.5 L1241 356 M1233.5 348 L1248.5 348"/>
</g>
<path d="M1270 343 L1278.5 343 L1283 349 L1278.5 356" fill="none" stroke="#c8c8c8" stroke-width="1"/>
<path d="M1266.5 352 L1265 347.5 Q1265 346.5 1266 346.5 Q1267 346.5 1267.5 348 L1267.5 344 Q1267.5 343 1268.5 343 Q1269.5 343 1269.5 344 L1269.8 347 L1270.2 342.5 Q1270.4 341.5 1271.4 341.6 Q1272.3 341.8 1272.2 342.8 L1272 347.5 L1273.3 344.2 Q1273.7 343.4 1274.5 343.7 Q1275.3 344 1275 345 L1274 351 Q1273 356.5 1269.5 356.5 Q1267.3 356.5 1266.5 352Z" fill="#c8c8c8"/>
<path d="M1268.5 341.5 Q1270 339.5 1272.5 340.5" fill="none" stroke="#c8c8c8" stroke-width="1"/>
<defs><pattern id="hatch" width="2" height="2" patternUnits="userSpaceOnUse" patternTransform="rotate(45)"><rect width="1" height="2" fill="#8a8a8a"/></pattern></defs><path d="M1297 341 H1313 V357 H1297Z M1300 344 V354 H1310 V344Z" fill="url(#hatch)" fill-rule="evenodd"/>
<rect x="1300.5" y="344.5" width="9" height="9" fill="none" stroke="#d0d0d0" stroke-width="1.2"/>
<rect x="1326" y="336" width="19" height="25" fill="#303030"/>
<path d="M1330.5 345 L1334.5 341.5 L1338.5 345 M1330.5 352.5 L1334.5 356 L1338.5 352.5" fill="none" stroke="#c0c0c0" stroke-width="1"/>
<rect x="1343" y="337" width="1" height="24" fill="#555"/>
</svg>

<!-- pasteboard -->
<div class="a" style="left:43px;top:365px;width:1302px;height:504px;background:#262626"></div>
<!-- stage -->
<div class="a" style="left:418px;top:522px;width:640px;height:347px;background:#000"></div>


<!-- symbol -->
<div class="a" style="left:911px;top:596px;width:112px;height:112px;background:radial-gradient(circle at 56.5px 56.5px, #10f810 0px, #00d400 14px, #00aa00 27px, #007400 37px, #003c00 45px, #000c00 52px, #000 55px)"></div>
<div class="a" style="left:910px;top:595px;width:114px;height:114px;border:1px solid #6f8fd0"></div>
<svg style="left:0;top:0" width="1345" height="869" viewBox="0 0 1345 869">
<circle cx="967.5" cy="652.5" r="3.7" fill="#f4f4f4" stroke="#111" stroke-width="1.3"/>
<path d="M967.5 650 L967.5 655 M965 652.5 L970 652.5" stroke="#111" stroke-width="1.3"/>
</svg>
<!-- watermark -->
<div class="a" style="left:991px;top:783px;font-size:41px;line-height:56px;color:#fff;white-space:nowrap;-webkit-text-stroke:0.7px #fff;text-shadow:1px 2px 3px rgba(0,0,0,0.55)">知乎</div>
<div class="a" id="wm" style="left:1088px;top:785px;font-size:41px;line-height:50px;color:#fff;white-space:nowrap;transform:scaleX(0.955);transform-origin:0 0;-webkit-text-stroke:0.5px #fff;text-shadow:1px 2px 3px rgba(0,0,0,0.55)">@FlashASer</div>
<!-- progress bar -->
<div class="a" style="left:922px;top:1px;width:59px;height:10px;background:#121212;border:1px solid #8a8a8a;border-radius:5px"></div>
<svg style="left:0;top:0" width="1345" height="60" viewBox="0 0 1345 60">
<rect x="924.5" y="3" width="0.9" height="6" fill="#5ec85e"/><rect x="926.1" y="3" width="0.9" height="6" fill="#5ec85e"/><rect x="927.7" y="3" width="0.9" height="6" fill="#5ec85e"/><rect x="929.3" y="3" width="0.9" height="6" fill="#5ec85e"/><rect x="930.9" y="3" width="0.9" height="6" fill="#5ec85e"/><rect x="932.5" y="3" width="0.9" height="6" fill="#5ec85e"/><rect x="934.1" y="3" width="0.9" height="6" fill="#5ec85e"/><rect x="935.7" y="3" width="0.9" height="6" fill="#5ec85e"/><rect x="937.3" y="3" width="0.9" height="6" fill="#5ec85e"/><rect x="938.9" y="3" width="0.9" height="6" fill="#5ec85e"/>
</svg>
<!-- compiler error panel -->
<div class="a" style="left:1008px;top:-3px;width:108px;height:57px;background:#303030;border:1px solid #262626;border-radius:3px"></div>
<div class="a" style="left:1009px;top:12px;width:106px;height:1px;background:#262626"></div>
<svg style="left:0;top:0" width="1345" height="60" viewBox="0 0 1345 60">
<path d="M1084.3 4.5 L1086.8 7 L1084.3 9.5 M1088.3 4.5 L1090.8 7 L1088.3 9.5" fill="none" stroke="#e8e8e8" stroke-width="1.2"/>
<path d="M1104.5 4.5 L1109.5 9.5 M1109.5 4.5 L1104.5 9.5" stroke="#c8c8c8" stroke-width="1.8"/>
<rect x="1052" y="17" width="1" height="4" fill="#4a4a4a"/><rect x="1054" y="17" width="1" height="4" fill="#4a4a4a"/><rect x="1056" y="17" width="1" height="4" fill="#4a4a4a"/><rect x="1058" y="17" width="1" height="4" fill="#4a4a4a"/><rect x="1060" y="17" width="1" height="4" fill="#4a4a4a"/><rect x="1062" y="17" width="1" height="4" fill="#4a4a4a"/><rect x="1064" y="17" width="1" height="4" fill="#4a4a4a"/><rect x="1066" y="17" width="1" height="4" fill="#4a4a4a"/><rect x="1068" y="17" width="1" height="4" fill="#4a4a4a"/><rect x="1070" y="17" width="1" height="4" fill="#4a4a4a"/>
<path d="M1026.3 28 L1035.5 43.5 L1017 43.5Z" fill="#d2d2d2" stroke="#d2d2d2" stroke-width="1" stroke-linejoin="round"/>
<rect x="1025.3" y="32.5" width="2" height="6" fill="#111"/>
<rect x="1025.3" y="39.8" width="2" height="2" fill="#111"/>
</svg>
<div class="a" style="left:1045px;top:30px;font-size:10.5px;line-height:14px;color:#f0f0f0;font-weight:bold">编译器错误</div>

</body></html>
